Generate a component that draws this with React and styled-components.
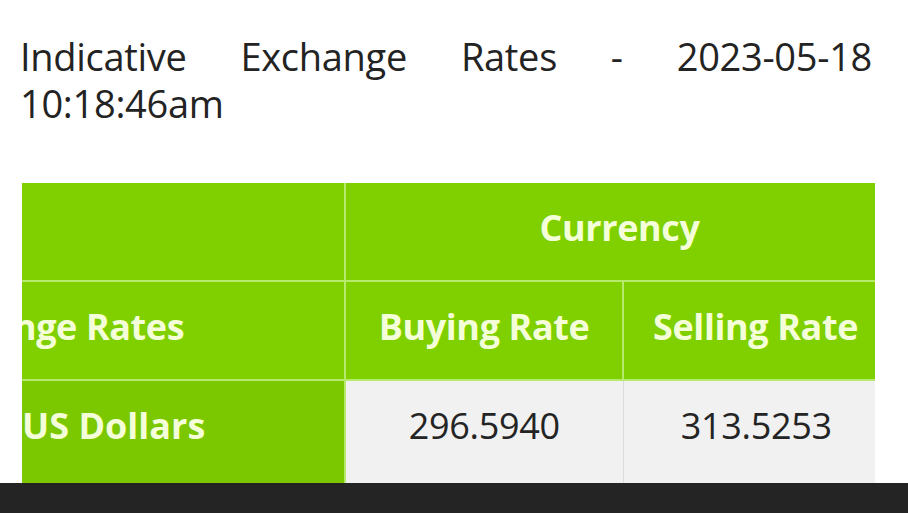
import React, { useLayoutEffect, useRef } from 'react'
import styled, { createGlobalStyle } from 'styled-components'

const rates = [
  { name: 'US Dollars', buying: '296.5940', selling: '313.5253' },
]

export default function App() {
  const scrollRef = useRef(null)

  // table is shown scrolled sideways, as in the phone view
  useLayoutEffect(() => {
    if (scrollRef.current) scrollRef.current.scrollLeft = 120
  }, [])

  return (
    <Page>
      <GlobalStyle />
      <Title>
        Indicative Exchange Rates - 2023-05-18
        <br />
        10:18:46am
      </Title>
      <TableScroll ref={scrollRef}>
        <RateTable>
          <colgroup>
            <col style={{ width: 443 }} />
            <col style={{ width: 278 }} />
            <col style={{ width: 252 }} />
          </colgroup>
          <thead>
            <tr>
              <HeadCell />
              <HeadCell colSpan={2} center indent={18}>Currency</HeadCell>
            </tr>
            <tr>
              <HeadCell indent={8}>Exchange Rates</HeadCell>
              <HeadCell center>Buying Rate</HeadCell>
              <HeadCell center indent={12}>Selling Rate</HeadCell>
            </tr>
          </thead>
          <tbody>
            {rates.map((r) => (
              <tr key={r.name}>
                <LabelCell>{r.name}</LabelCell>
                <ValueCell>{r.buying}</ValueCell>
                <ValueCell shift>{r.selling}</ValueCell>
              </tr>
            ))}
          </tbody>
        </RateTable>
      </TableScroll>
      <NavBar />
    </Page>
  )
}

const GlobalStyle = createGlobalStyle`
  html, body {
    margin: 0;
    padding: 0;
    background: #ffffff;
  }
  body {
    font-family: "Open Sans", "Noto Sans", sans-serif;
    overflow: hidden;
  }
`

const Page = styled.div`
  width: 908px;
  height: 513px;
  box-sizing: border-box;
  padding: 33px 36px 0 20px;
  background: #ffffff;
`

const Title = styled.div`
  font-family: "Open Sans", sans-serif;
  font-weight: 400;
  font-size: 38px;
  line-height: 47px;
  color: #232323;
  text-align: justify;
  text-align-last: justify;
  letter-spacing: -0.3px;
  margin: 0 0 56px 0;
`

const TableScroll = styled.div`
  width: 853px;
  margin-left: 2px;
  overflow-x: auto;
  scrollbar-width: none;
  &::-webkit-scrollbar {
    display: none;
  }
`

const RateTable = styled.table`
  border-collapse: collapse;
  table-layout: fixed;
  width: 973px;
`

const HeadCell = styled.th`
  height: 89px;
  padding: 0 0 8px ${({ indent }) => (indent ? `${indent}px` : '0')};
  background: #80d000;
  border: 2px solid #b6ea6c;
  color: #f4ffd9;
  font-family: "Open Sans", sans-serif;
  font-weight: 700;
  font-size: 36px;
  letter-spacing: -0.4px;
  white-space: nowrap;
  overflow: hidden;
  text-align: ${({ center }) => (center ? 'center' : 'left')};
  tr:first-child > & {
    border-top: none;
  }
  tr > &:first-child {
    border-left: none;
  }
  tr > &:last-child {
    border-right: none;
  }
`

const LabelCell = styled.td`
  height: 88px;
  padding: 0 0 24px 120px;
  background: #7bc700;
  border-right: 2px solid #b6ea6c;
  color: #f4ffd9;
  font-family: "Open Sans", sans-serif;
  font-weight: 700;
  font-size: 36px;
  letter-spacing: 0;
  white-space: nowrap;
  text-align: left;
`

const ValueCell = styled.td`
  height: 88px;
  padding: 0 0 24px ${({ shift }) => (shift ? '14px' : '0')};
  background: #f1f1f1;
  border-left: 1px solid #dcdcdc;
  color: #242424;
  font-family: "Open Sans", sans-serif;
  font-weight: 400;
  font-size: 36px;
  letter-spacing: -0.3px;
  text-align: center;
  &:nth-child(2) {
    border-left: none;
  }
`

const NavBar = styled.div`
  position: fixed;
  left: 0;
  right: 0;
  bottom: 0;
  height: 30px;
  background: #232423;
`
